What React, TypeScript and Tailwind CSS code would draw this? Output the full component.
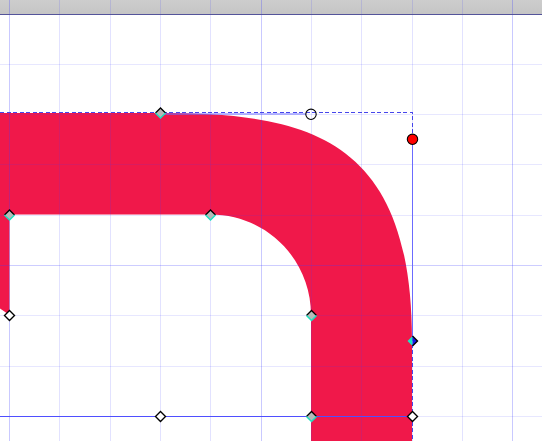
import React from 'react';

const W = 542;
const H = 441;

// grid geometry read off the canvas
const gridX = [9.5, 59.5, 110.5, 160.5, 210.5, 261.5, 311.5, 361.5, 412.5, 462.5, 512.5];
const gridY = [14.5, 64.5, 114.5, 164.5, 215.5, 265.5, 315.5, 366.5, 416.5];

type NodeKind = 'gray' | 'white' | 'split';

interface NodeProps {
  x: number;
  y: number;
  kind: NodeKind;
}

const Diamond: React.FC<NodeProps> = ({ x, y, kind }) => {
  const r = 5;
  const pts = `${x},${y - r} ${x + r},${y} ${x},${y + r} ${x - r},${y}`;
  if (kind === 'white') {
    return <polygon points={pts} fill="#ffffff" stroke="#000000" strokeWidth={1.4} />;
  }
  if (kind === 'split') {
    return (
      <g>
        <polygon points={`${x},${y - r} ${x},${y + r} ${x - r},${y}`} fill="#19e6c4" />
        <polygon points={`${x},${y - r} ${x + r},${y} ${x},${y + r}`} fill="#1a1ae6" />
        <polyline points={`${x},${y - r} ${x + r},${y} ${x},${y + r}`} fill="none" stroke="#000000" strokeWidth={1.4} />
      </g>
    );
  }
  return (
    <g>
      <polygon points={pts} fill="#b8b8b8" />
      <polyline points={`${x - r},${y} ${x},${y - r} ${x + r},${y}`} fill="none" stroke="#000000" strokeWidth={1.3} />
      <polyline points={`${x - r},${y} ${x},${y + r} ${x + r},${y}`} fill="none" stroke="#1fe0c0" strokeWidth={1.5} />
    </g>
  );
};

const nodes: NodeProps[] = [
  { x: 160.5, y: 113, kind: 'gray' },
  { x: 9.5, y: 215, kind: 'gray' },
  { x: 210.5, y: 215, kind: 'gray' },
  { x: 9.5, y: 315.5, kind: 'white' },
  { x: 311.5, y: 315.5, kind: 'gray' },
  { x: 412.5, y: 341, kind: 'split' },
  { x: 160.5, y: 416.5, kind: 'white' },
  { x: 311.5, y: 416.5, kind: 'gray' },
  { x: 412.5, y: 416.5, kind: 'white' },
];

const Canvas: React.FC = () => (
  <svg
    className="absolute inset-0"
    width={W}
    height={H}
    viewBox={`0 0 ${W} ${H}`}
    shapeRendering="geometricPrecision"
  >
    {/* the path being edited */}
    <path
      d="M -40 113 L 160.5 113 C 311 113 412 139 412 341 L 412 470 L 311 470 L 311 315 C 311 259 266 214.5 210.5 214.5 L 9.5 214.5 L 9.5 315 L -30 288 Z"
      fill="#f0184a"
    />

    {/* grid on top */}
    {gridX.map((x, i) => (
      <line
        key={`gx${i}`}
        x1={x}
        y1={0}
        x2={x}
        y2={H}
        stroke="#3c3cff"
        strokeOpacity={i % 5 === 0 ? 0.28 : 0.15}
        strokeWidth={1}
        shapeRendering="crispEdges"
      />
    ))}
    {gridY.map((y, i) => (
      <line
        key={`gy${i}`}
        x1={0}
        y1={y}
        x2={W}
        y2={y}
        stroke="#3c3cff"
        strokeOpacity={i === 5 ? 0.26 : 0.12}
        strokeWidth={1}
        shapeRendering="crispEdges"
      />
    ))}

    {/* page edge */}
    <line x1={0} y1={14.5} x2={W} y2={14.5} stroke="#54549a" strokeWidth={1.4} shapeRendering="crispEdges" />

    {/* bounding box */}
    <polyline
      points="0,112.5 412.5,112.5 412.5,441"
      fill="none"
      stroke="#4646ec"
      strokeWidth={1}
      strokeDasharray="4 2.5"
      shapeRendering="crispEdges"
    />

    {/* handle lines */}
    <line x1={160.5} y1={114} x2={306} y2={114} stroke="#7373ff" strokeWidth={1} />
    <line x1={412.5} y1={144} x2={412.5} y2={341} stroke="#6b6bff" strokeWidth={1} />
    <line x1={0} y1={416.5} x2={412.5} y2={416.5} stroke="#4f4fff" strokeWidth={1.2} />

    {/* handles */}
    <circle cx={311} cy={114.3} r={5.2} fill="none" stroke="#000000" strokeWidth={1.1} />
    <circle cx={412.5} cy={139.3} r={5.2} fill="#ff0000" stroke="#000000" strokeWidth={1.1} />

    {nodes.map((n, i) => (
      <Diamond key={i} {...n} />
    ))}
  </svg>
);

export default function App() {
  return (
    <div className="relative w-[542px] h-[441px] overflow-hidden bg-white">
      {/* desk strip above the page */}
      <div className="h-[14px] bg-gradient-to-b from-[#cdcdcd] to-[#c5c5c5]" />
      <Canvas />
    </div>
  );
}
